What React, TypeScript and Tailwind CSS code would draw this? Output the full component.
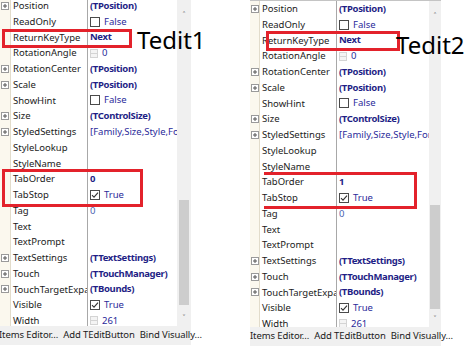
import React from "react";

type Kind = "bold" | "plain" | "faint";

interface Prop {
  name: string;
  value?: string;
  kind?: Kind;
  plus?: boolean;
  check?: boolean;
  spin?: boolean;
}

const props = (tabOrder: string): Prop[] => [
  { name: "Position", plus: true, value: "(TPosition)", kind: "bold" },
  { name: "ReadOnly", check: false, value: "False" },
  { name: "ReturnKeyType", value: "Next", kind: "bold" },
  { name: "RotationAngle", spin: true, value: "0" },
  { name: "RotationCenter", plus: true, value: "(TPosition)", kind: "bold" },
  { name: "Scale", plus: true, value: "(TPosition)", kind: "bold" },
  { name: "ShowHint", check: false, value: "False" },
  { name: "Size", plus: true, value: "(TControlSize)", kind: "bold" },
  { name: "StyledSettings", plus: true, value: "[Family,Size,Style,FontColor,Other]" },
  { name: "StyleLookup" },
  { name: "StyleName" },
  { name: "TabOrder", value: tabOrder, kind: "bold" },
  { name: "TabStop", check: true, value: "True" },
  { name: "Tag", value: "0", kind: "faint" },
  { name: "Text" },
  { name: "TextPrompt" },
  { name: "TextSettings", plus: true, value: "(TTextSettings)", kind: "bold" },
  { name: "Touch", plus: true, value: "(TTouchManager)", kind: "bold" },
  { name: "TouchTargetExpansion", plus: true, value: "(TBounds)", kind: "bold" },
  { name: "Visible", check: true, value: "True" },
  { name: "Width", spin: true, value: "261" },
];

function PlusBox() {
  return (
    <svg width="8" height="8" viewBox="0 0 8 8" className="block">
      <rect x="0.5" y="0.5" width="7" height="7" fill="#fff" stroke="#9a9a9a" />
      <path d="M2 4h4M4 2v4" stroke="#555" strokeWidth="1" />
    </svg>
  );
}

function CheckBox({ on }: { on: boolean }) {
  return (
    <svg width="10" height="10" viewBox="0 0 10 10" className="block shrink-0">
      <rect x="0.5" y="0.5" width="9" height="9" fill="#fff" stroke="#4a4a4a" />
      {on && <path d="M2 5.2l2 2 4-4.6" fill="none" stroke="#333" strokeWidth="1.1" />}
    </svg>
  );
}

function Spin() {
  return (
    <svg width="8" height="9" viewBox="0 0 8 9" className="block shrink-0">
      <rect x="0.5" y="0.5" width="7" height="8" fill="#f4f4f4" stroke="#d4d4d4" />
      <path d="M1 4.5h6" stroke="#d4d4d4" />
    </svg>
  );
}

function Inspector({
  tabOrder,
  gutter,
  valueW,
  scrollW,
  thumbTop,
  thumbH,
  topPad,
}: {
  tabOrder: string;
  gutter: number;
  valueW: number;
  scrollW: string;
  thumbTop: string;
  thumbH: string;
  topPad: string;
}) {
  return (
    <div className="flex flex-col" style={{ width: gutter + 77 + valueW }}>
      <div className="flex h-[326px] overflow-hidden">
        <div className={`flex-1 overflow-hidden ${topPad}`}>
          {props(tabOrder).map((p) => (
            <div key={p.name} className="flex h-[15.75px] items-center">
              <div
                className="flex h-full items-center justify-center border-r border-[#e2dccb] bg-[#fbf8ee]"
                style={{ width: gutter }}
              >
                {p.plus && <PlusBox />}
              </div>
              <div className="h-full w-[77px] overflow-hidden whitespace-nowrap border-r border-[#a8a8a8] pl-[2px] leading-[15.75px] text-[#1b1b1b]">
                {p.name}
              </div>
              <div className="flex h-full flex-1 items-center gap-[4px] overflow-hidden whitespace-nowrap pl-[2px]">
                {p.check !== undefined && <CheckBox on={p.check} />}
                {p.spin && <Spin />}
                {p.value && (
                  <span
                    className={
                      p.kind === "bold"
                        ? "font-bold tracking-[-0.35px] text-[#1f1f86]"
                        : p.kind === "faint"
                        ? "text-[#4b5fb0]"
                        : "text-[#2a2a9a]"
                    }
                  >
                    {p.value}
                  </span>
                )}
              </div>
            </div>
          ))}
        </div>
        <div className={`flex h-full flex-col items-center bg-[#f0f0f0] ${scrollW}`}>
          <div className="mt-[10px] text-[9px] leading-[9px] text-[#606060]">˄</div>
          <div className={`w-[10px] bg-[#cdcdcd] ${thumbTop} ${thumbH}`} />
          <div className="mt-auto mb-[4px] text-[9px] leading-[9px] text-[#606060]">˅</div>
        </div>
      </div>
      <div className="flex h-[19px] items-center gap-[5px] whitespace-nowrap bg-[#f0f0f0] tracking-[-0.1px] text-[#1b1b1b]">
        <span>Items Editor...</span>
        <span>Add TEditButton</span>
        <span>Bind Visually...</span>
      </div>
    </div>
  );
}

export default function App() {
  return (
    <div
      className="relative h-[355px] w-[474px] overflow-hidden bg-white text-[9.5px]"
      style={{ fontFamily: '"Noto Sans", "Open Sans", sans-serif' }}
    >
      <div className="flex">
        <div className="-ml-[1px]">
          <Inspector
            tabOrder="0"
            gutter={12}
            valueW={103}
            scrollW="w-[14px]"
            thumbTop="mt-[181px]"
            thumbH="h-[105px]"
            topPad="-mt-[2px]"
          />
        </div>
        <div className="ml-[59px] border-t border-[#c4c4c4]">
          <Inspector
            tabOrder="1"
            gutter={10}
            valueW={104}
            scrollW="w-[12px]"
            thumbTop="mt-[185px]"
            thumbH="h-[104px]"
            topPad="mt-[0px]"
          />
        </div>
      </div>

      {/* red annotation boxes */}
      <div className="absolute left-[2px] top-[29px] h-[19px] w-[130px] border-[3px] border-[#e3222b]" />
      <div className="absolute left-[2px] top-[169px] h-[38px] w-[141px] border-[3px] border-[#e3222b]" />
      <div className="absolute left-[266px] top-[31px] h-[20px] w-[134px] border-[3px] border-[#e3222b]" />
      <div className="absolute left-[264px] top-[172px] h-[37px] w-[153px] border-[3px] border-l-0 border-[#e3222b]" />

      <div className="absolute left-[137px] top-[25px] text-[24px] leading-[30px] text-black">Tedit1</div>
      <div className="absolute left-[396px] top-[30px] text-[24px] leading-[30px] text-black">Tedit2</div>
    </div>
  );
}
